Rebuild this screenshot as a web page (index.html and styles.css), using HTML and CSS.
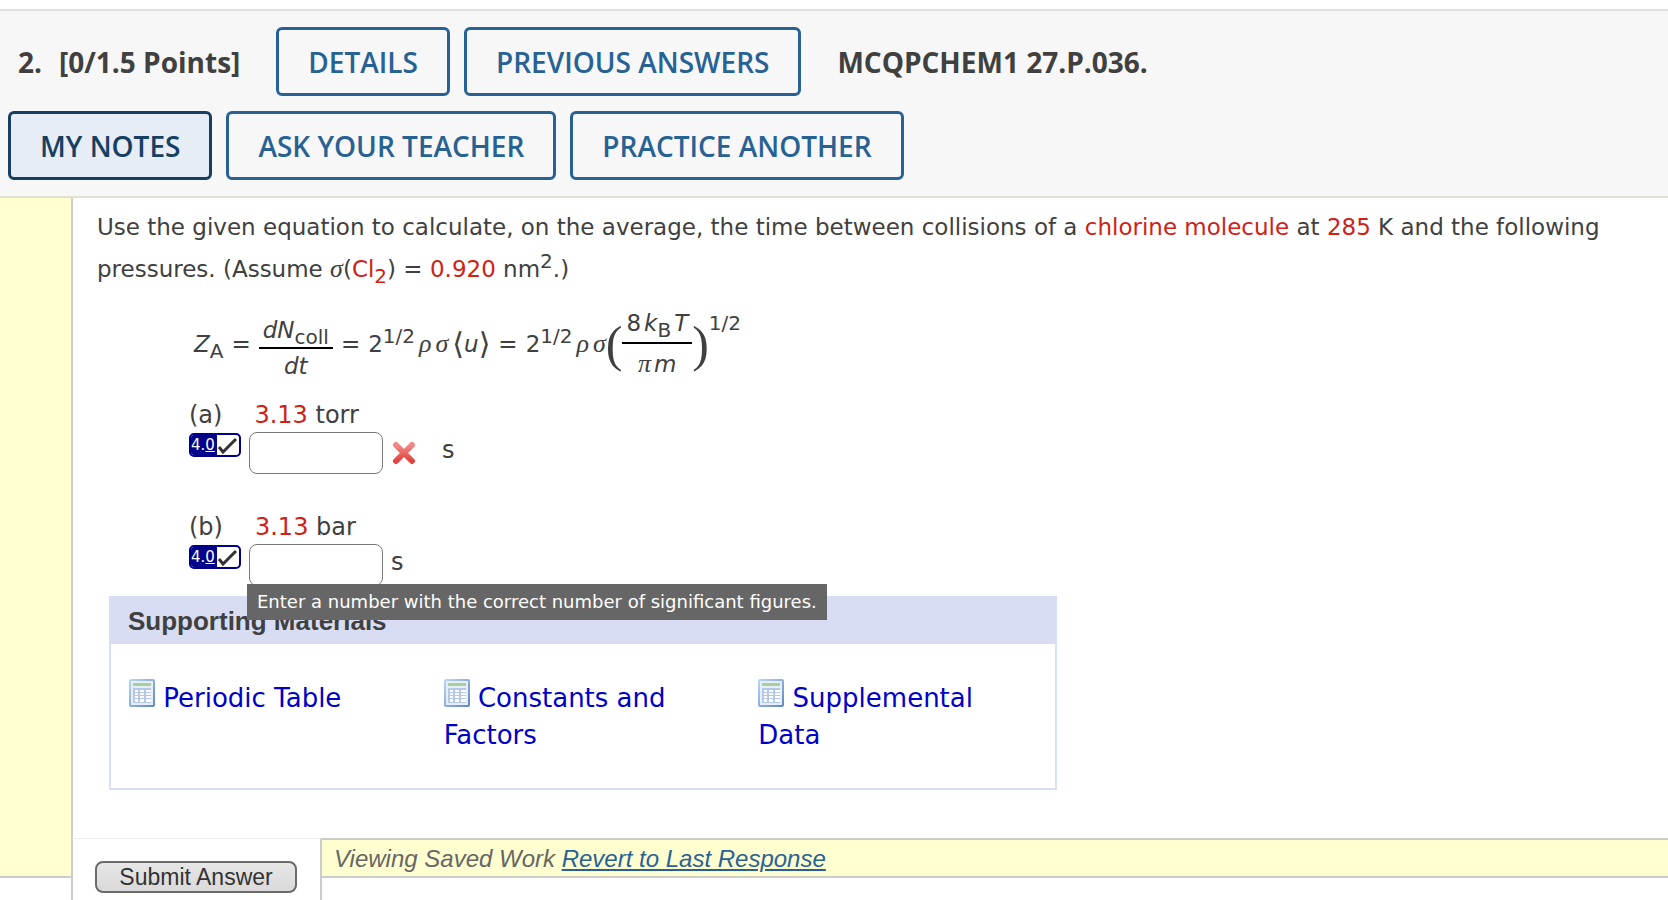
FILE: index.html
```html
<!DOCTYPE html>
<html lang="en">
<head>
  <meta charset="UTF-8">
  <title>MCQPCHEM1 27.P.036.</title>
  <link rel="stylesheet" href="styles.css">
</head>
<body>

<svg class="defs" width="0" height="0" aria-hidden="true">
  <defs>
    <linearGradient id="sheetEdge" x1="0" y1="0" x2="1" y2="1">
      <stop offset="0" stop-color="#b9d3f3"/>
      <stop offset="1" stop-color="#6289c4"/>
    </linearGradient>
    <linearGradient id="crossFill" x1="0" y1="0" x2="0" y2="1">
      <stop offset="0" stop-color="#f08a85"/>
      <stop offset="1" stop-color="#e0433f"/>
    </linearGradient>
    <symbol id="sheet" viewBox="0 0 26 28">
      <rect x="1" y="1" width="24" height="26" rx="1" fill="#e6eefa" stroke="url(#sheetEdge)" stroke-width="2"/>
      <rect x="4" y="4" width="18" height="3" fill="#a9cf9a"/>
      <rect x="4" y="9" width="18" height="15" fill="#b4c8ea"/>
      <path d="M6 11h3v2H6zM11 11h4v2h-4zM17 11h5v2h-5zM6 14h3v2H6zM11 14h4v2h-4zM17 14h5v2h-5zM6 17h3v2H6zM11 17h4v2h-4zM17 17h5v2h-5zM6 20h3v3H6zM11 20h4v3h-4zM17 20h5v3h-5z" fill="#fff"/>
    </symbol>
    <symbol id="check" viewBox="0 0 22 20">
      <path d="M2 12l4 5L19 4" fill="none" stroke="#333" stroke-width="3"/>
    </symbol>
  </defs>
</svg>

<header class="question-header">
  <div class="header-row">
    <span class="number">2.</span>
    <span class="points">[0/1.5 Points]</span>
    <button class="btn" type="button">DETAILS</button>
    <button class="btn" type="button">PREVIOUS ANSWERS</button>
    <span class="code">MCQPCHEM1 27.P.036.</span>
  </div>
  <div class="header-row">
    <button class="btn active" type="button">MY NOTES</button>
    <button class="btn" type="button">ASK YOUR TEACHER</button>
    <button class="btn" type="button">PRACTICE ANOTHER</button>
  </div>
</header>

<main class="question">
  <div class="gutter"></div>

  <section class="content">
    <p class="prompt">Use the given equation to calculate, on the average, the time between collisions of a <span class="red">chlorine molecule</span> at <span class="red">285</span> K and the following pressures. (Assume <i class="greek">σ</i>(<span class="red">Cl<sub>2</sub></span>) = <span class="red">0.920</span> nm<sup>2</sup>.)</p>

    <div class="equation">
      <span><i>Z</i><sub>A</sub></span>
      <span class="equals">=</span>
      <span class="fraction rate">
        <span class="top"><span><i>dN</i><sub>coll</sub></span></span>
        <span class="bottom"><i>dt</i></span>
      </span>
      <span class="equals">=</span>
      <span>2<sup>1/2</sup></span>
      <i class="greek">ρ</i>
      <i class="greek">σ</i>
      <span class="mean"><span class="angle">⟨</span><i>u</i><span class="angle">⟩</span></span>
      <span class="equals">=</span>
      <span>2<sup>1/2</sup></span>
      <i class="greek">ρ</i>
      <i class="greek">σ</i>
      <span class="group">
        <span class="paren">(</span>
        <span class="fraction">
          <span class="top"><span>8</span><span><i>k</i><sub>B</sub></span><i>T</i></span>
          <span class="bottom"><i class="greek">π</i><i>m</i></span>
        </span>
        <span class="paren">)</span>
        <span class="power">1/2</span>
      </span>
    </div>

    <div class="part">
      <label class="part-label" for="answerA"><span>(a)</span><span><span class="red">3.13</span> torr</span></label>
      <div class="answer">
        <span class="sigfig"><span class="sigfig-num">4.<u>0</u></span><svg class="sigfig-check"><use href="#check"/></svg></span>
        <input type="text" id="answerA">
        <svg class="cross" viewBox="0 0 24 24"><path d="M4 4l8 8 8-8M4 20l8-8 8 8" fill="none" stroke="url(#crossFill)" stroke-width="6" stroke-linejoin="round" stroke-linecap="round"/></svg>
        <span class="unit">s</span>
      </div>
    </div>

    <div class="part">
      <label class="part-label" for="answerB"><span>(b)</span><span><span class="red">3.13</span> bar</span></label>
      <div class="answer">
        <span class="sigfig"><span class="sigfig-num">4.<u>0</u></span><svg class="sigfig-check"><use href="#check"/></svg></span>
        <span class="field">
          <input type="text" id="answerB" aria-describedby="tip">
          <span class="tooltip" id="tip" role="tooltip">Enter a number with the correct number of significant figures.</span>
        </span>
        <span class="unit">s</span>
      </div>
    </div>

    <div class="materials">
      <h3>Supporting Materials</h3>
      <div class="links">
        <div><svg class="sheet"><use href="#sheet"/></svg> <a href="#">Periodic Table</a></div>
        <div><svg class="sheet"><use href="#sheet"/></svg> <a href="#">Constants and Factors</a></div>
        <div><svg class="sheet"><use href="#sheet"/></svg> <a href="#">Supplemental Data</a></div>
      </div>
    </div>
  </section>

  <div class="submit">
    <button class="submit-btn" type="button">Submit Answer</button>
  </div>
  <div class="saved">Viewing Saved Work <a href="#">Revert to Last Response</a></div>
</main>

</body>
</html>
```
FILE: styles.css
```css
* {
  box-sizing: border-box;
}

body {
  margin: 0;
  padding-top: 9px;
  min-height: 100vh;
  display: flex;
  flex-direction: column;
  background: #fff;
  color: #404040;
  font-family: Verdana, "DejaVu Sans", sans-serif;
  font-size: 24px;
}

.defs {
  position: absolute;
}

.red {
  color: #cf2217;
}

.greek {
  font-family: "Liberation Serif", serif;
  font-size: 26px;
}

sub, sup {
  font-size: 20px;
  line-height: 0;
}

/* header */
.question-header {
  border-top: 2px solid #e0e0e0;
  border-bottom: 2px solid #e0e0d3;
  background: #f7f7f7;
  padding: 16px 8px;
  font-family: "Open Sans", sans-serif;
  font-size: 28px;
  font-weight: 700;
}

.header-row {
  display: flex;
  flex-wrap: wrap;
  align-items: center;
  gap: 14px;
}

.header-row + .header-row {
  margin-top: 15px;
}

.number {
  padding-left: 10px;
}

.points {
  padding: 0 22px 0 3px;
}

.code {
  padding-left: 22px;
}

.btn {
  height: 69px;
  padding: 0 29px;
  border: 3px solid #286294;
  border-radius: 6px;
  background: transparent;
  color: #286294;
  font: 600 28px "Open Sans", sans-serif;
  cursor: pointer;
}

.btn.active {
  background: #e6edf4;
  border-color: #163f61;
  color: #163f61;
}

/* question body */
.question {
  flex: 1;
  display: grid;
  grid-template-columns: 71px 251px 1fr;
  grid-template-rows: auto 40px 1fr;
}

.gutter {
  grid-row: 1 / 3;
  background: #ffffd0;
  border-bottom: 2px solid #ccc;
}

.content {
  grid-column: 2 / 4;
  padding: 8px 24px 48px;
  border-left: 2px solid #ccc;
}

.prompt {
  margin: 0;
  font-size: 23px;
  line-height: 42px;
}

.equation {
  display: flex;
  align-items: center;
  gap: 4px;
  height: 68px;
  margin: 20px 0 20px 97px;
  font-size: 23px;
  line-height: 28px;
}

.equation .equals {
  padding: 0 4px;
}

.equation .fraction {
  display: flex;
  flex-direction: column;
}

.equation .top {
  display: flex;
  gap: 3px;
  height: 35px;
  padding: 0 4px;
  border-bottom: 2px solid #000;
}

.equation .bottom {
  display: flex;
  justify-content: center;
  gap: 3px;
  height: 35px;
  padding-top: 6px;
}

.equation .rate {
  padding-top: 8px;
}

.equation .rate .top {
  height: 33px;
}

.equation .rate .bottom {
  height: 31px;
  padding-top: 3px;
}

.mean, .group {
  display: flex;
  align-items: center;
}

.angle {
  font-size: 30px;
}

.paren {
  font-family: "Liberation Serif", serif;
  font-size: 50px;
}

.group {
  margin-left: -4px;
}

.power {
  align-self: flex-start;
  font-size: 20px;
}

/* answers */
.part {
  height: 112px;
  margin-left: 92px;
}

.part-label {
  display: flex;
  gap: 32px;
  line-height: 34px;
}

.answer {
  display: flex;
  align-items: flex-start;
}

.sigfig {
  display: flex;
  width: 52px;
  height: 24px;
  margin: 1px 8px 0 0;
  border: 2px solid #00008b;
  border-radius: 5px;
  overflow: hidden;
}

.sigfig-num {
  width: 26px;
  background: #00008b;
  color: #fff;
  font-size: 15px;
  line-height: 20px;
}

.sigfig-check {
  width: 22px;
  height: 20px;
}

.answer input {
  display: block;
  width: 134px;
  height: 42px;
  padding: 0 8px;
  border: 1px solid #77777c;
  border-radius: 8px;
  font: inherit;
}

.cross {
  width: 24px;
  height: 24px;
  margin: 9px 18px 0 9px;
}

.unit {
  margin-left: 8px;
  line-height: 36px;
}

.field {
  position: relative;
}

.tooltip {
  position: absolute;
  top: 40px;
  left: -2px;
  padding: 0 10px;
  background: #666;
  color: #fff;
  font-size: 18px;
  line-height: 36px;
  white-space: nowrap;
}

/* supporting materials */
.materials {
  max-width: 948px;
  margin: -26px 0 0 12px;
  border: 2px solid #d8def3;
}

.materials h3 {
  margin: 0;
  padding: 0 17px;
  background: #d8ddf3;
  font: 700 26px "Liberation Sans", Arial, sans-serif;
  line-height: 46px;
}

.links {
  display: grid;
  grid-template-columns: repeat(3, 1fr);
  padding: 35px 0 34px;
  font-size: 26px;
  line-height: 37px;
}

.links div {
  padding: 0 60px 0 18px;
}

.links a {
  color: #0000c8;
  text-decoration: none;
}

.sheet {
  width: 26px;
  height: 28px;
}

/* bottom bar */
.submit {
  grid-column: 2;
  grid-row: 2 / 4;
  padding: 22px 23px 0 22px;
  border-top: 1px solid #eee;
  border-left: 2px solid #ccc;
  border-right: 2px solid #ccc;
}

.submit-btn {
  width: 100%;
  height: 32px;
  border: 2px solid #6b6b6b;
  border-radius: 8px;
  background: linear-gradient(#e6e6e6, #dadada);
  color: #333;
  font: 23px "Liberation Sans", Arial, sans-serif;
  line-height: 28px;
  padding: 0;
}

.saved {
  padding-left: 12px;
  border-top: 2px solid #ccc;
  border-bottom: 2px solid #ccc;
  background: #ffffd0;
  color: #666;
  font: italic 24px "Liberation Sans", Arial, sans-serif;
  line-height: 38px;
}

.saved a {
  color: #286294;
}
```
